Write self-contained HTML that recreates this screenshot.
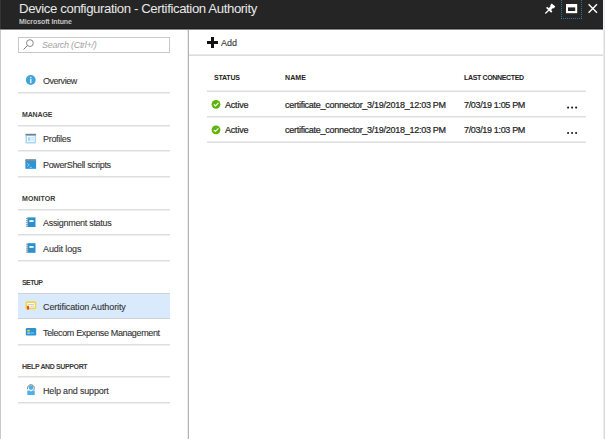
<!DOCTYPE html>
<html><head><meta charset="utf-8">
<style>
*{margin:0;padding:0;box-sizing:border-box}
html,body{width:605px;height:439px;overflow:hidden;background:#fff;font-family:"Liberation Sans",sans-serif;color:#333}
.a{position:absolute}
.t{position:absolute;white-space:nowrap;color:#333}
.s{-webkit-text-stroke:0.1px currentColor}
.s2{-webkit-text-stroke:0.2px currentColor}
.b{font-weight:bold;color:#3a3a3a}
svg{position:absolute;overflow:visible}
</style></head><body>
<div class="a" style="left:0;top:0;width:603px;height:29px;background:#252525"></div>
<div class="a" style="left:0;top:28px;width:603px;height:1px;background:#1c1c1c"></div>
<div class="a" style="left:0;top:29px;width:603px;height:1px;background:#8a8a8a"></div>
<div class="a" style="left:0;top:0;width:1px;height:29px;background:#343434"></div>
<div class="t" style="left:19px;top:1.33px;font-size:13.2px;letter-spacing:-0.39px;line-height:16px;color:#e8e8e8">Device configuration - Certification Authority</div>
<div class="t b" style="left:19px;top:17.07px;font-size:7px;letter-spacing:-0.1px;line-height:9px;color:#c4c4c4">Microsoft Intune</div>
<div class="a" style="left:0;top:30px;width:1px;height:409px;background:#c8c8c8"></div>
<div class="a" style="left:603px;top:0;width:1px;height:30px;background:#f6f6fa"></div>
<div class="a" style="left:604px;top:0;width:1px;height:30px;background:#ececf4"></div>
<div class="a" style="left:603px;top:30px;width:1px;height:409px;background:#ececf0"></div>
<div class="a" style="left:604px;top:30px;width:1px;height:409px;background:#d8d8e2"></div>
<div class="a" style="left:188px;top:30px;width:1px;height:409px;background:#b4b4b4"></div>
<div class="a" style="left:187px;top:30px;width:1px;height:409px;background:#ececec"></div>
<div class="a" style="left:18px;top:37px;width:152px;height:16px;border:1px solid #c8c8c8"></div>
<div class="t" style="left:42px;top:38.78px;font-size:9px;letter-spacing:-0.29px;line-height:12px;font-style:italic;color:#a4a4a4">Search (Ctrl+/)</div>
<div class="t s" style="left:43px;top:75.18px;font-size:9.0px;letter-spacing:-0.47px;line-height:12px;">Overview</div>
<div class="a" style="left:18px;top:92px;width:152px;height:1px;background:#dedede"></div>
<div class="a" style="left:18px;top:93px;width:152px;height:1px;background:#efefef"></div>
<div class="t b" style="left:22px;top:110.27px;font-size:7.0px;letter-spacing:-0.15px;line-height:9px;">MANAGE</div>
<div class="a" style="left:18px;top:125px;width:152px;height:1px;background:#dedede"></div>
<div class="a" style="left:18px;top:126px;width:152px;height:1px;background:#efefef"></div>
<div class="t s" style="left:43px;top:132.88px;font-size:9.0px;letter-spacing:-0.3px;line-height:12px;">Profiles</div>
<div class="a" style="left:18px;top:150px;width:152px;height:1px;background:#dedede"></div>
<div class="a" style="left:18px;top:151px;width:152px;height:1px;background:#efefef"></div>
<div class="t s" style="left:43px;top:158.58px;font-size:9.0px;letter-spacing:-0.35px;line-height:12px;">PowerShell scripts</div>
<div class="a" style="left:18px;top:176px;width:152px;height:1px;background:#dedede"></div>
<div class="a" style="left:18px;top:177px;width:152px;height:1px;background:#efefef"></div>
<div class="t b" style="left:22px;top:194.27px;font-size:7.0px;letter-spacing:0.05px;line-height:9px;">MONITOR</div>
<div class="a" style="left:18px;top:209px;width:152px;height:1px;background:#dedede"></div>
<div class="a" style="left:18px;top:210px;width:152px;height:1px;background:#efefef"></div>
<div class="t s" style="left:43px;top:216.88px;font-size:9.0px;letter-spacing:-0.3px;line-height:12px;">Assignment status</div>
<div class="a" style="left:18px;top:234px;width:152px;height:1px;background:#dedede"></div>
<div class="a" style="left:18px;top:235px;width:152px;height:1px;background:#efefef"></div>
<div class="t s" style="left:43px;top:243.18px;font-size:9.0px;letter-spacing:-0.12px;line-height:12px;">Audit logs</div>
<div class="a" style="left:18px;top:260px;width:152px;height:1px;background:#dedede"></div>
<div class="a" style="left:18px;top:261px;width:152px;height:1px;background:#efefef"></div>
<div class="t b" style="left:22px;top:278.07px;font-size:7.0px;letter-spacing:-0.6px;line-height:9px;">SETUP</div>
<div class="a" style="left:18px;top:293px;width:152px;height:26px;background:#d8eafc;border-top:1px solid #d2d2d4;border-bottom:1px solid #d2d2d4"></div>
<div class="t s" style="left:43px;top:300.98px;font-size:9.0px;letter-spacing:-0.1px;line-height:12px;">Certification Authority</div>
<div class="t s" style="left:43px;top:326.68px;font-size:9.0px;letter-spacing:-0.36px;line-height:12px;">Telecom Expense Management</div>
<div class="a" style="left:18px;top:344px;width:152px;height:1px;background:#dedede"></div>
<div class="a" style="left:18px;top:345px;width:152px;height:1px;background:#efefef"></div>
<div class="t b" style="left:22px;top:361.87px;font-size:7.0px;letter-spacing:-0.37px;line-height:9px;">HELP AND SUPPORT</div>
<div class="a" style="left:18px;top:376px;width:152px;height:1px;background:#dedede"></div>
<div class="a" style="left:18px;top:377px;width:152px;height:1px;background:#efefef"></div>
<div class="t s" style="left:43px;top:384.88px;font-size:9.0px;letter-spacing:-0.18px;line-height:12px;">Help and support</div>
<div class="a" style="left:18px;top:402px;width:152px;height:1px;background:#dedede"></div>
<div class="a" style="left:18px;top:403px;width:152px;height:1px;background:#efefef"></div>
<div class="a" style="left:189px;top:54px;width:414px;height:1px;background:#e8e8e8"></div>
<div class="a" style="left:189px;top:55px;width:414px;height:1px;background:#dcdcdc"></div>
<div class="a" style="left:207px;top:41px;width:11px;height:3px;background:#111"></div>
<div class="a" style="left:211px;top:37px;width:3px;height:11px;background:#111"></div>
<div class="t s" style="left:221px;top:36.68px;font-size:9px;letter-spacing:0px;line-height:12px;">Add</div>
<div class="t b" style="left:214px;top:72.67px;font-size:7.0px;letter-spacing:-0.2px;line-height:9px;color:#222">STATUS</div>
<div class="t b" style="left:285px;top:72.67px;font-size:7.0px;letter-spacing:0.13px;line-height:9px;color:#222">NAME</div>
<div class="t b" style="left:464px;top:72.67px;font-size:7.0px;letter-spacing:-0.35px;line-height:9px;color:#222">LAST CONNECTED</div>
<div class="a" style="left:207px;top:90px;width:379px;height:1px;background:#ededed"></div>
<div class="a" style="left:207px;top:91px;width:379px;height:1px;background:#dedede"></div>
<div class="t s2" style="left:225px;top:98.78px;font-size:9.0px;letter-spacing:-0.2px;line-height:12px;color:#222">Active</div>
<div class="t s2" style="left:285px;top:98.78px;font-size:9.0px;letter-spacing:-0.27px;line-height:12px;color:#222">certificate_connector_3/19/2018_12:03 PM</div>
<div class="t s2" style="left:464px;top:98.78px;font-size:9.0px;letter-spacing:-0.34px;line-height:12px;color:#222">7/03/19 1:05 PM</div>
<div class="t s2" style="left:225px;top:123.98px;font-size:9.0px;letter-spacing:-0.2px;line-height:12px;color:#222">Active</div>
<div class="t s2" style="left:285px;top:123.98px;font-size:9.0px;letter-spacing:-0.27px;line-height:12px;color:#222">certificate_connector_3/19/2018_12:03 PM</div>
<div class="t s2" style="left:464px;top:123.98px;font-size:9.0px;letter-spacing:-0.34px;line-height:12px;color:#222">7/03/19 1:03 PM</div>
<div class="a" style="left:207px;top:116px;width:379px;height:1px;background:#dedede"></div>
<div class="a" style="left:207px;top:117px;width:379px;height:1px;background:#efefef"></div>
<div class="a" style="left:207px;top:141px;width:379px;height:1px;background:#ededed"></div>
<div class="a" style="left:207px;top:142px;width:379px;height:1px;background:#dedede"></div>
<!-- header pin -->
<svg style="left:0;top:0" width="605" height="439" viewBox="0 0 605 439">
  <g stroke="#fff" fill="none">
    <line x1="550.9" y1="4.4" x2="554.5" y2="7.4" stroke-width="2.6"/>
    <line x1="552.7" y1="5.9" x2="549.6" y2="9.4" stroke-width="3"/>
    <line x1="546.6" y1="7.4" x2="551.8" y2="12" stroke-width="1.7"/>
    <line x1="549.2" y1="9.8" x2="545.3" y2="13.5" stroke-width="1.2"/>
  </g>
  <!-- maximize dotted frame -->
  <g stroke="#1a9ad6" stroke-width="1" stroke-dasharray="1 1" fill="none">
    <line x1="561.5" y1="0" x2="561.5" y2="19"/>
    <line x1="581.5" y1="0" x2="581.5" y2="19"/>
    <line x1="561" y1="18.5" x2="582" y2="18.5"/>
  </g>
  <rect x="562" y="0" width="19" height="18" fill="none" stroke="#3a2424" stroke-width="0.6"/>
  <rect x="566" y="4" width="11.2" height="9.2" fill="#fff"/>
  <rect x="568" y="7.4" width="7.2" height="3.6" fill="#252525"/>
  <!-- close -->
  <g stroke="#fff" stroke-width="1.4">
    <line x1="588.6" y1="4.3" x2="597" y2="12.8"/>
    <line x1="597" y1="4.3" x2="588.6" y2="12.8"/>
  </g>

  <!-- search magnifier -->
  <circle cx="29.9" cy="43.1" r="3.4" fill="none" stroke="#7a7a7a" stroke-width="0.9"/>
  <line x1="27.5" y1="45.5" x2="23.5" y2="49.5" stroke="#7a7a7a" stroke-width="1"/>

  <!-- info -->
  <circle cx="30.75" cy="80" r="4.9" fill="#43a4da"/>
  <rect x="30.15" y="76.9" width="1.3" height="1.2" fill="#eef7fc"/>
  <rect x="30.15" y="78.9" width="1.3" height="4.3" fill="#eef7fc"/>

  <!-- profiles -->
  <rect x="25.5" y="134" width="10.6" height="9.4" rx="1" fill="#a9d6f1"/>
  <rect x="25.5" y="133.8" width="10.6" height="1.6" fill="#7a7f85"/>
  <rect x="27" y="136.2" width="7.6" height="5.6" fill="#fff"/>
  <rect x="27.8" y="137.2" width="2.6" height="3.6" fill="#a6d4f0"/>
  <rect x="31.2" y="137.4" width="2.8" height="1" fill="#a6d4f0"/>
  <rect x="31.2" y="139.4" width="2.8" height="1" fill="#a6d4f0"/>

  <!-- powershell -->
  <rect x="25.4" y="159.4" width="10.7" height="9.4" fill="#2b95d6"/>
  <rect x="25.4" y="159.4" width="10.7" height="1.6" fill="#8a8a8a"/>
  <polyline points="27.2,163.4 29.4,165 27.2,166.6" fill="none" stroke="#a9d8f5" stroke-width="0.8"/>
  <line x1="29.6" y1="167.4" x2="32" y2="167.4" stroke="#9fd0f0" stroke-width="0.8"/>

  <!-- notebook x2 -->
  <g>
    <rect x="27.5" y="217.4" width="8" height="9.6" fill="#2a90d0"/>
    <rect x="29.4" y="220.2" width="4.2" height="1.8" fill="#fff"/>
    <g stroke="#7a7a7a" stroke-width="0.8">
      <line x1="26" y1="218.4" x2="27.8" y2="218.4"/>
      <line x1="26" y1="220.4" x2="27.8" y2="220.4"/>
      <line x1="26" y1="222.4" x2="27.8" y2="222.4"/>
      <line x1="26" y1="224.4" x2="27.8" y2="224.4"/>
      <line x1="26" y1="226.3" x2="27.8" y2="226.3"/>
    </g>
  </g>
  <g transform="translate(0 25.8)">
    <rect x="27.5" y="217.4" width="8" height="9.6" fill="#2a90d0"/>
    <rect x="29.4" y="220.2" width="4.2" height="1.8" fill="#fff"/>
    <g stroke="#7a7a7a" stroke-width="0.8">
      <line x1="26" y1="218.4" x2="27.8" y2="218.4"/>
      <line x1="26" y1="220.4" x2="27.8" y2="220.4"/>
      <line x1="26" y1="222.4" x2="27.8" y2="222.4"/>
      <line x1="26" y1="224.4" x2="27.8" y2="224.4"/>
      <line x1="26" y1="226.3" x2="27.8" y2="226.3"/>
    </g>
  </g>

  <!-- certificate -->
  <rect x="25.5" y="301.3" width="10.8" height="8" rx="1.6" fill="#f7d448"/>
  <rect x="27.2" y="303" width="7.5" height="4.6" fill="#fbfbfb"/>
  <rect x="28.2" y="304.1" width="5.6" height="0.7" fill="#b8b8b8"/>
  <rect x="30.6" y="305.8" width="3.2" height="0.7" fill="#b8b8b8"/>
  <rect x="26.9" y="305.8" width="2.2" height="3.8" fill="#e45c0a"/>

  <!-- telecom -->
  <rect x="25.8" y="328" width="10.4" height="7.5" rx="1.2" fill="#2c92d2"/>
  <ellipse cx="28.5" cy="330.7" rx="1.5" ry="0.9" fill="#f4d22a"/>
  <rect x="27.4" y="332.4" width="2.4" height="1.6" fill="#a8d6f2"/>
  <rect x="30.4" y="332.4" width="3.8" height="1.2" fill="#7cc0ea"/>

  <!-- help -->
  <path d="M27.7,389.2 A3.4,3.4 0 1 1 33.6,390.2" fill="none" stroke="#707070" stroke-width="0.9"/>
  <circle cx="31" cy="387.6" r="2.3" fill="#4db0e8"/>
  <path d="M27.3,390.4 L29.7,390.4 L31,391.6 L32.3,390.4 L34.7,390.4 L34.7,394.9 L27.3,394.9 Z" fill="#4db0e8"/>

  <!-- checks -->
  <g>
    <circle cx="216" cy="104.3" r="4.4" fill="#5cb300"/>
    <polyline points="213.8,104.3 215.4,105.9 218.4,102.8" fill="none" stroke="#fff" stroke-width="1.2"/>
  </g>
  <g transform="translate(0 25.5)">
    <circle cx="216" cy="104.3" r="4.4" fill="#5cb300"/>
    <polyline points="213.8,104.3 215.4,105.9 218.4,102.8" fill="none" stroke="#fff" stroke-width="1.2"/>
  </g>

  <!-- ellipsis -->
  <g fill="#1a1a2a">
    <circle cx="568.1" cy="107.6" r="1.05"/>
    <circle cx="572.1" cy="107.6" r="1.05"/>
    <circle cx="576.1" cy="107.6" r="1.05"/>
    <circle cx="568.1" cy="133" r="1.05"/>
    <circle cx="572.1" cy="133" r="1.05"/>
    <circle cx="576.1" cy="133" r="1.05"/>
  </g>
</svg>

</body></html>
